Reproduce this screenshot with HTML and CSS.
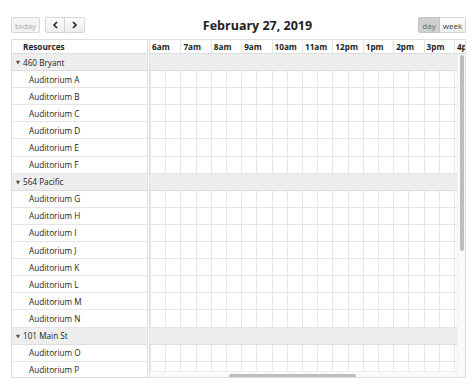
FILE: index.html
```html
<!DOCTYPE html>
<html>
<head>
<meta charset="utf-8">
<link rel="stylesheet" href="styles.css">
</head>
<body>
<div class="cal">
  <div class="toolbar">
    <div class="left">
      <button class="btn disabled">today</button>
      <div class="group">
        <button class="btn arrow"><svg width="7" height="8" viewBox="0 0 7 8"><path d="M5 1 L2 4 L5 7" fill="none" stroke="#222" stroke-width="1.6"/></svg></button>
        <button class="btn arrow"><svg width="7" height="8" viewBox="0 0 7 8"><path d="M2 1 L5 4 L2 7" fill="none" stroke="#222" stroke-width="1.6"/></svg></button>
      </div>
    </div>
    <h2 class="title">February 27, 2019</h2>
    <div class="group right">
      <button class="btn active">day</button>
      <button class="btn">week</button>
    </div>
  </div>
  <div class="view">
    <div class="res">
      <div class="head">Resources</div>
      <div class="row grp"><span class="tri">▼</span>460 Bryant</div>
      <div class="row item">Auditorium A</div>
      <div class="row item">Auditorium B</div>
      <div class="row item">Auditorium C</div>
      <div class="row item">Auditorium D</div>
      <div class="row item">Auditorium E</div>
      <div class="row item">Auditorium F</div>
      <div class="row grp"><span class="tri">▼</span>564 Pacific</div>
      <div class="row item">Auditorium G</div>
      <div class="row item">Auditorium H</div>
      <div class="row item">Auditorium I</div>
      <div class="row item">Auditorium J</div>
      <div class="row item">Auditorium K</div>
      <div class="row item">Auditorium L</div>
      <div class="row item">Auditorium M</div>
      <div class="row item">Auditorium N</div>
      <div class="row grp"><span class="tri">▼</span>101 Main St</div>
      <div class="row item">Auditorium O</div>
      <div class="row item">Auditorium P</div>
    </div>
    <div class="divider"></div>
    <div class="time">
      <div class="thead">
        <div class="hr">6am</div><div class="hr">7am</div><div class="hr">8am</div><div class="hr">9am</div><div class="hr">10am</div><div class="hr">11am</div><div class="hr">12pm</div><div class="hr">1pm</div><div class="hr">2pm</div><div class="hr">3pm</div><div class="hr">4pm</div>
      </div>
      <div class="tbody">
        <div class="lane grp"></div>
        <div class="lane"></div><div class="lane"></div><div class="lane"></div><div class="lane"></div><div class="lane"></div><div class="lane"></div>
        <div class="lane grp"></div>
        <div class="lane"></div><div class="lane"></div><div class="lane"></div><div class="lane"></div><div class="lane"></div><div class="lane"></div><div class="lane"></div><div class="lane"></div>
        <div class="lane grp"></div>
        <div class="lane"></div><div class="lane"></div>
      </div>
      <div class="vscroll"><div class="vthumb"></div></div>
      <div class="hscroll"><div class="hthumb"></div></div>
    </div>
  </div>
</div>
</body>
</html>
```

FILE: styles.css
```css
* { box-sizing: border-box; }
html, body { margin: 0; padding: 0; background: #fff; }
body {
  font-family: "Open Sans", "DejaVu Sans", sans-serif;
  font-size: 8.2px;
  color: #333;
}
.cal { width: 474px; height: 386px; padding: 17px 8px 0 11px; }
.toolbar {
  display: flex;
  align-items: center;
  justify-content: space-between;
  height: 16px;
  margin-bottom: 6px;
}
.left { display: flex; gap: 5px; align-items: center; }
.group { display: flex; }
.btn {
  height: 16px;
  padding: 0 4px;
  border: 1px solid #d6d6d6;
  background: linear-gradient(#fdfdfd, #ececec);
  font: inherit;
  font-size: 8px;
  color: #333;
  display: flex;
  align-items: center;
  justify-content: center;
  border-radius: 2px;
}
.group .btn:first-child { border-top-right-radius: 0; border-bottom-right-radius: 0; }
.group .btn:last-child { border-top-left-radius: 0; border-bottom-left-radius: 0; border-left: none; }
.btn.disabled { color: #aaa; background: #f3f3f3; width: 29px; }
.btn.arrow { width: 20px; padding: 0; }
.btn.active { background: #cfcfcf; color: #666; border-color: #c4c4c4; width: 22px; }
.right .btn:last-child { width: 26px; color: #444; }
.title {
  margin: 0;
  font-size: 12.5px;
  font-weight: bold;
  color: #222;
  position: relative;
  left: 6px;
}
.view {
  display: grid;
  grid-template-columns: 135px 3px 1fr;
  border: 1px solid #ddd;
  height: 339px;
  overflow: hidden;
}
.res { display: flex; flex-direction: column; }
.head {
  height: 14px;
  border-bottom: 1px solid #ddd;
  font-weight: bold;
  padding-left: 11px;
  line-height: 13px;
  color: #222;
}
.row {
  height: 17.1px;
  border-bottom: 1px solid #e6e6e6;
  display: flex;
  align-items: center;
  flex-shrink: 0;
}
.row.item { padding-left: 17px; color: #222; }
.row.grp { background: #eee; padding-left: 2px; color: #222; border-bottom-color: #ddd; }
.tri { font-size: 5px; width: 8px; margin-right: 1px; text-align: center; color: #444; }
.divider { border-left: 1px solid #ddd; border-right: 1px solid #ddd; background: #fff; }
.time { position: relative; overflow: hidden; }
.thead {
  display: flex;
  height: 14px;
  border-bottom: 1px solid #ddd;
}
.hr {
  flex: 0 0 30.4px;
  border-left: 1px solid #e4e4e4;
  padding-left: 2px;
  font-weight: bold;
  line-height: 13px;
  color: #222;
  white-space: nowrap;
}
.hr:first-child { border-left: none; }
.tbody {
  background-image:
    repeating-linear-gradient(90deg, #e6e6e6 0 1px, transparent 1px 15.2px);
}
.lane {
  height: 17.1px;
  border-bottom: 1px solid #e6e6e6;
}
.lane.grp { background: #eee; border-bottom-color: #ddd; }
.vscroll {
  position: absolute;
  right: 0;
  top: 14px;
  bottom: 0;
  width: 8px;
  background: #fafafa;
  border-left: 1px solid #eee;
}
.vthumb {
  margin: 1px 0 0 2px;
  width: 4px;
  height: 196px;
  background: #bdbdbd;
  border-radius: 2px;
}
.hscroll {
  position: absolute;
  left: 0;
  right: 8px;
  bottom: 0;
  height: 8px;
  background: #fafafa;
  border-top: 1px solid #eee;
}
.hthumb {
  margin: 2px 0 0 79px;
  width: 127px;
  height: 4px;
  background: #bdbdbd;
  border-radius: 2px;
}
```
